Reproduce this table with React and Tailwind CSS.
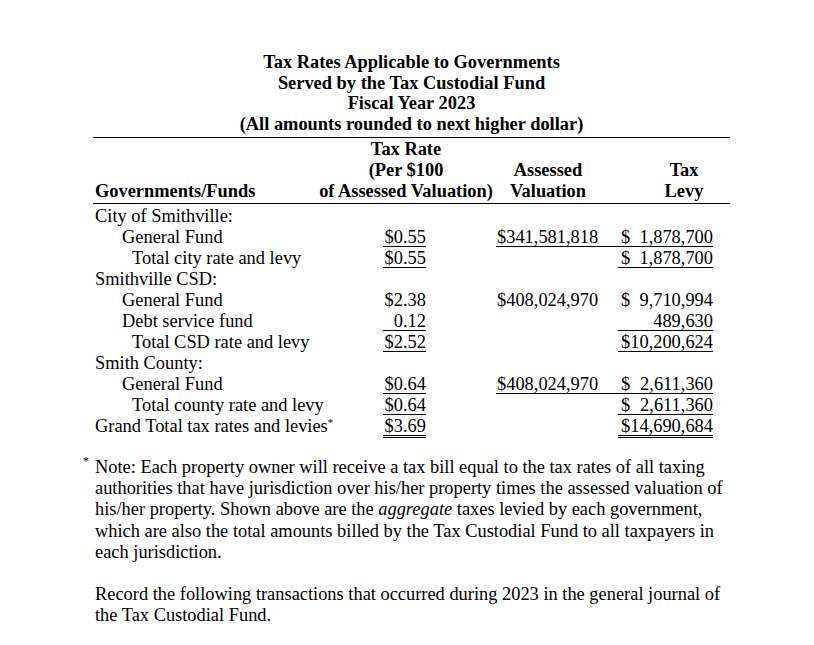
import React from "react";

const rows = [
  { label: "City of Smithville:", indent: "pl-[2px]" },
  {
    label: "General Fund",
    indent: "pl-[29px]",
    rate: "$0.55",
    assessed: "$341,581,818",
    dollar: "$",
    levy: "1,878,700",
    rateLine: true,
    wideLine: true,
  },
  {
    label: "Total city rate and levy",
    indent: "pl-[39px]",
    rate: "$0.55",
    dollar: "$",
    levy: "1,878,700",
    rateLine: true,
    levyLine: true,
  },
  { label: "Smithville CSD:", indent: "pl-[2px]" },
  {
    label: "General Fund",
    indent: "pl-[29px]",
    rate: "$2.38",
    assessed: "$408,024,970",
    dollar: "$",
    levy: "9,710,994",
  },
  {
    label: "Debt service fund",
    indent: "pl-[29px]",
    rate: "0.12",
    levy: "489,630",
    rateLine: true,
    levyLine: true,
  },
  {
    label: "Total CSD rate and levy",
    indent: "pl-[39px]",
    rate: "$2.52",
    dollar: "$",
    levy: "10,200,624",
    rateLine: true,
    levyLine: true,
  },
  { label: "Smith County:", indent: "pl-[2px]" },
  {
    label: "General Fund",
    indent: "pl-[29px]",
    rate: "$0.64",
    assessed: "$408,024,970",
    dollar: "$",
    levy: "2,611,360",
    rateLine: true,
    wideLine: true,
  },
  {
    label: "Total county rate and levy",
    indent: "pl-[39px]",
    rate: "$0.64",
    dollar: "$",
    levy: "2,611,360",
    rateLine: true,
    levyLine: true,
  },
  {
    label: "Grand Total tax rates and levies",
    star: true,
    indent: "pl-[2px]",
    rate: "$3.69",
    dollar: "$",
    levy: "14,690,684",
    double: true,
  },
];

function Row({ r }) {
  // the "$14,690,684" style amounts have no gap after the dollar sign
  const tight = r.levy && r.levy.length > 9;

  let rateCls = "h-[20px] text-right";
  let assessedCls = "h-[20px] pl-[1px]";
  let levyCls = "h-[20px] flex justify-between pl-[3px]";

  if (r.rateLine) rateCls += " border-b border-black";
  if (r.wideLine) {
    assessedCls += " border-b border-black";
    levyCls += " border-b border-black";
  }
  if (r.levyLine) levyCls += " border-b border-black";
  if (r.double) {
    rateCls = "h-[22px] text-right border-b-[3px] border-double border-black";
    levyCls = "h-[22px] flex justify-between pl-[3px] border-b-[3px] border-double border-black";
  }

  return (
    <div className="grid grid-cols-[290px_43px_70px_122px_95px] h-[21px] leading-[21px]">
      <div className={`whitespace-nowrap ${r.indent}`}>
        {r.label}
        {r.star && <sup className="text-[11px]">*</sup>}
      </div>
      <div className={r.rate ? rateCls : ""}>{r.rate}</div>
      <div />
      <div className={r.assessed || r.wideLine ? assessedCls : ""}>{r.assessed}</div>
      <div className={r.levy ? levyCls : ""}>
        {r.levy && (
          <>
            <span>{tight ? "" : r.dollar}</span>
            <span>{tight ? r.dollar + r.levy : r.levy}</span>
          </>
        )}
      </div>
    </div>
  );
}

export default function App() {
  return (
    <div className="w-[814px] h-[645px] bg-white text-black text-[18.4px] font-['Liberation_Serif',_'Times_New_Roman',_serif] overflow-hidden">
      <div className="ml-[93px] w-[637px] pt-[52px]">
        {/* Title */}
        <div className="text-center font-bold leading-[20.7px]">
          <div>Tax Rates Applicable to Governments</div>
          <div>Served by the Tax Custodial Fund</div>
          <div>Fiscal Year 2023</div>
          <div>(All amounts rounded to next higher dollar)</div>
        </div>

        {/* Column headings */}
        <div className="mt-[2px] border-t border-black pt-[1px] pb-[1px] border-b">
          <div className="grid grid-cols-[223px_180px_104px_38px_92px] grid-rows-[21px_21px_21px] leading-[21px] font-bold">
            <div className="row-span-3 flex flex-col justify-end pl-[2px] whitespace-nowrap">
              Governments/Funds
            </div>
            <div className="row-span-3 flex flex-col justify-end items-center whitespace-nowrap">
              <div>Tax Rate</div>
              <div>(Per $100</div>
              <div>of Assessed Valuation)</div>
            </div>
            <div className="row-span-3 flex flex-col justify-end items-center whitespace-nowrap">
              <div>Assessed</div>
              <div>Valuation</div>
            </div>
            <div className="row-span-3" />
            <div className="row-span-3 flex flex-col justify-end items-center">
              <div>Tax</div>
              <div>Levy</div>
            </div>
          </div>
        </div>

        {/* Rates */}
        <div className="pt-[2px]">
          {rows.map((r, i) => (
            <Row key={i} r={r} />
          ))}
        </div>
      </div>

      {/* Footnote */}
      <div className="ml-[83px] mt-[20px] flex leading-[21.25px]">
        <div className="w-[12px] shrink-0 text-[12px] leading-[8px]">*</div>
        <p className="w-[636px]">
          Note: Each property owner will receive a tax bill equal to the tax rates of all taxing
          authorities that have jurisdiction over his/her property times the assessed valuation of
          his/her property. Shown above are the <i>aggregate</i> taxes levied by each government,
          which are also the total amounts billed by the Tax Custodial Fund to all taxpayers in
          each jurisdiction.
        </p>
      </div>

      <p className="ml-[95px] mt-[21px] w-[636px] leading-[21.25px]">
        Record the following transactions that occurred during 2023 in the general journal of
        the Tax Custodial Fund.
      </p>
    </div>
  );
}
